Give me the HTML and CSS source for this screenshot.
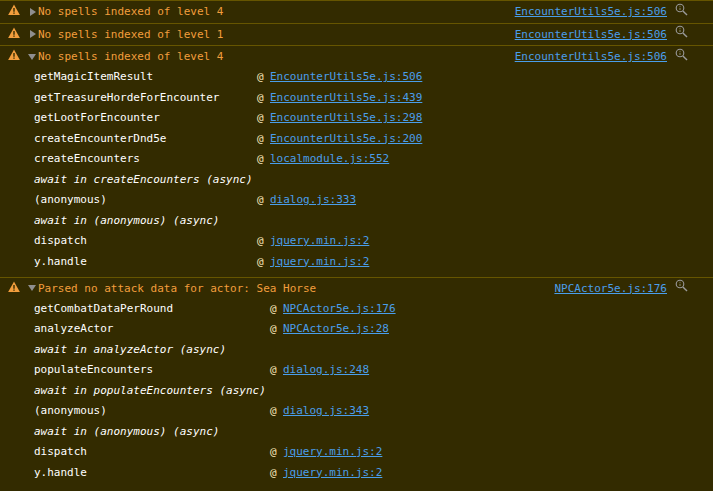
FILE: index.html
```html
<!DOCTYPE html>
<html lang="en">

<head>
    <meta charset="UTF-8">
    <title>Console</title>
    <link rel="stylesheet" href="styles.css">
</head>

<body>
    <svg class="defs" width="0" height="0">
        <symbol id="warn" viewBox="0 0 12 12">
            <path d="M6 .6 11.9 11H.1Z" fill="#f29e3d"/>
            <path d="M5.3 4h1.4v3.8H5.3ZM5.3 8.4h1.4v1.3H5.3Z" fill="#332b00"/>
        </symbol>
        <symbol id="lens" viewBox="0 0 13 13">
            <circle cx="5" cy="5" r="3.8" fill="none" stroke="#9a9a9a" stroke-width="1.1"/>
            <path d="M7.9 7.9 12 12" stroke="#9a9a9a" stroke-width="1.4"/>
            <path d="M5 2.8v1M5 4.8v2.2" stroke="#8a8a70" stroke-width="1"/>
        </symbol>
    </svg>

    <div class="msg">
        <div class="head">
            <svg class="warn"><use href="#warn"/></svg>
            <span class="arrow arrow-right"></span>
            <span class="text">No spells indexed of level 4</span>
            <a class="link src">EncounterUtils5e.js:506</a>
            <svg class="lens"><use href="#lens"/></svg>
        </div>
    </div>
    <div class="msg">
        <div class="head">
            <svg class="warn"><use href="#warn"/></svg>
            <span class="arrow arrow-right"></span>
            <span class="text">No spells indexed of level 1</span>
            <a class="link src">EncounterUtils5e.js:506</a>
            <svg class="lens"><use href="#lens"/></svg>
        </div>
    </div>
    <div class="msg">
        <div class="head">
            <svg class="warn"><use href="#warn"/></svg>
            <span class="arrow arrow-down"></span>
            <span class="text">No spells indexed of level 4</span>
            <a class="link src">EncounterUtils5e.js:506</a>
            <svg class="lens"><use href="#lens"/></svg>
        </div>
        <div class="stack stack-a">
            <span>getMagicItemResult</span><span class="at">@</span><a class="link">EncounterUtils5e.js:506</a>
            <span>getTreasureHordeForEncounter</span><span class="at">@</span><a class="link">EncounterUtils5e.js:439</a>
            <span>getLootForEncounter</span><span class="at">@</span><a class="link">EncounterUtils5e.js:298</a>
            <span>createEncounterDnd5e</span><span class="at">@</span><a class="link">EncounterUtils5e.js:200</a>
            <span>createEncounters</span><span class="at">@</span><a class="link">localmodule.js:552</a>
            <em class="async">await in createEncounters (async)</em>
            <span>(anonymous)</span><span class="at">@</span><a class="link">dialog.js:333</a>
            <em class="async">await in (anonymous) (async)</em>
            <span>dispatch</span><span class="at">@</span><a class="link">jquery.min.js:2</a>
            <span>y.handle</span><span class="at">@</span><a class="link">jquery.min.js:2</a>
        </div>
    </div>
    <div class="msg">
        <div class="head">
            <svg class="warn"><use href="#warn"/></svg>
            <span class="arrow arrow-down"></span>
            <span class="text">Parsed no attack data for actor: Sea Horse</span>
            <a class="link src">NPCActor5e.js:176</a>
            <svg class="lens"><use href="#lens"/></svg>
        </div>
        <div class="stack stack-b">
            <span>getCombatDataPerRound</span><span class="at">@</span><a class="link">NPCActor5e.js:176</a>
            <span>analyzeActor</span><span class="at">@</span><a class="link">NPCActor5e.js:28</a>
            <em class="async">await in analyzeActor (async)</em>
            <span>populateEncounters</span><span class="at">@</span><a class="link">dialog.js:248</a>
            <em class="async">await in populateEncounters (async)</em>
            <span>(anonymous)</span><span class="at">@</span><a class="link">dialog.js:343</a>
            <em class="async">await in (anonymous) (async)</em>
            <span>dispatch</span><span class="at">@</span><a class="link">jquery.min.js:2</a>
            <span>y.handle</span><span class="at">@</span><a class="link">jquery.min.js:2</a>
        </div>
    </div>
</body>

</html>
```

FILE: styles.css
```css
html {
    background: #332b00;
}

body {
    margin: 0;
    font-family: "DejaVu Sans Mono", monospace;
    font-size: 11px;
    color: #fff;
    overflow: hidden;
}

.defs {
    display: block;
    height: 0;
}

.msg {
    border-top: 1px solid #665500;
}

.head {
    height: 21.5px;
    display: flex;
    align-items: center;
    padding: 0 46px 0 8px;
    color: #f29e3d;
}

.warn {
    width: 12px;
    height: 12px;
    margin-top: -3px;
    flex: none;
}

.arrow {
    width: 0;
    height: 0;
    flex: none;
    border-style: solid;
    border-color: transparent;
}

.arrow-right {
    margin: 0 2px 0 10px;
    border-width: 4px 0 4px 6px;
    border-left-color: #8f8f8f;
}

.arrow-down {
    margin: 0 2px 0 8px;
    border-width: 6px 4px 0;
    border-top-color: #8f8f8f;
}

.text {
    flex: 1;
}

.link {
    color: #4a9eea;
    text-decoration: underline;
}

.lens {
    width: 13px;
    height: 13px;
    margin: -5px -21px 0 8px;
    flex: none;
}

.stack {
    display: grid;
    grid-auto-rows: 20.5px;
    align-items: center;
    margin-top: -1px;
    padding: 0 0 5px 34px;
}

.stack-a {
    grid-template-columns: 223px 13px 1fr;
}

.stack-b {
    grid-template-columns: 236px 13px 1fr;
}

.at {
    color: #f5e3b5;
}

.async {
    grid-column: 1 / -1;
}
```
